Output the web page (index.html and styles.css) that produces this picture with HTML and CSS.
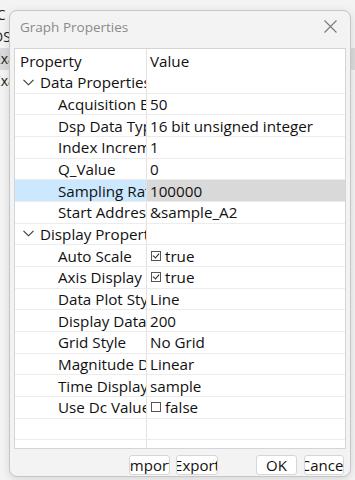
FILE: index.html
```html
<!DOCTYPE html>
<html lang="en">
<head>
  <meta charset="UTF-8" />
  <meta name="viewport" content="width=device-width, initial-scale=1.0"/>
  <title>Graph Properties</title>
  <link rel="stylesheet" href="styles.css">
</head>
<body>

  <div class="desktop">
    <div class="bg-list">
      <div class="bg-item">.C</div>
      <div class="bg-item">DSO</div>
      <div class="bg-item selected">Exa</div>
      <div class="bg-item">Exa</div>
    </div>

    <div class="dialog">
      <div class="titlebar">
        <span class="title">Graph Properties</span>
        <svg class="close" width="13" height="13" viewBox="0 0 13 13">
          <path d="M0.5 0.5 L12.5 12.5 M12.5 0.5 L0.5 12.5" stroke="#7a7a7a" stroke-width="1.1" fill="none"/>
        </svg>
      </div>

      <div class="grid-panel">
        <div class="row head">
          <div class="cell name">Property</div>
          <div class="cell value">Value</div>
        </div>

        <div class="row group">
          <div class="cell name">
            <svg class="chevron" width="11" height="7" viewBox="0 0 11 7"><path d="M0.5 0.8 L5.5 5.8 L10.5 0.8" stroke="#333" stroke-width="1.1" fill="none"/></svg>
            Data Properties
          </div>
          <div class="cell value"></div>
        </div>
        <div class="row"><div class="cell name child">Acquisition Buffer Size</div><div class="cell value">50</div></div>
        <div class="row"><div class="cell name child">Dsp Data Type</div><div class="cell value">16 bit unsigned integer</div></div>
        <div class="row"><div class="cell name child">Index Increment</div><div class="cell value">1</div></div>
        <div class="row"><div class="cell name child">Q_Value</div><div class="cell value">0</div></div>
        <div class="row selected"><div class="cell name child">Sampling Rate</div><div class="cell value">100000</div></div>
        <div class="row"><div class="cell name child">Start Address</div><div class="cell value">&amp;sample_A2</div></div>

        <div class="row group">
          <div class="cell name">
            <svg class="chevron" width="11" height="7" viewBox="0 0 11 7"><path d="M0.5 0.8 L5.5 5.8 L10.5 0.8" stroke="#333" stroke-width="1.1" fill="none"/></svg>
            Display Properties
          </div>
          <div class="cell value"></div>
        </div>
        <div class="row"><div class="cell name child">Auto Scale</div><div class="cell value"><span class="check on"></span>true</div></div>
        <div class="row"><div class="cell name child">Axis Display</div><div class="cell value"><span class="check on"></span>true</div></div>
        <div class="row"><div class="cell name child">Data Plot Style</div><div class="cell value">Line</div></div>
        <div class="row"><div class="cell name child">Display Data Size</div><div class="cell value">200</div></div>
        <div class="row"><div class="cell name child">Grid Style</div><div class="cell value">No Grid</div></div>
        <div class="row"><div class="cell name child">Magnitude Display</div><div class="cell value">Linear</div></div>
        <div class="row"><div class="cell name child">Time Display</div><div class="cell value">sample</div></div>
        <div class="row"><div class="cell name child">Use Dc Value</div><div class="cell value"><span class="check"></span>false</div></div>
        <div class="row"><div class="cell name"></div><div class="cell value"></div></div>
        <div class="row"><div class="cell name"></div><div class="cell value"></div></div>
        <div class="row"><div class="cell name"></div><div class="cell value"></div></div>
      </div>

      <div class="buttons">
        <button class="btn">Import</button>
        <button class="btn wide">Export</button>
        <span class="spacer"></span>
        <button class="btn">OK</button>
        <button class="btn narrow">Cancel</button>
      </div>
    </div>
  </div>

</body>
</html>
```

FILE: styles.css
```css
body {
  margin: 0;
  font-family: "Open Sans", "Noto Sans", sans-serif;
  background: #f0f0f0;
  color: #111;
}
.desktop {
  position: relative;
  width: 355px;
  height: 480px;
  overflow: hidden;
  background: #f3f3f3;
}
.bg-list {
  padding-top: 4px;
  margin-left: -11px;
  font-size: 14px;
}
.bg-item {
  height: 22px;
  line-height: 22px;
  padding-left: 4px;
  color: #222;
}
.bg-item.selected {
  background: #dadada;
}
.dialog {
  position: absolute;
  left: 9px;
  top: 10px;
  width: 340px;
  height: 465px;
  background: #f3f3f3;
  border: 1px solid #c6c6c6;
  border-radius: 8px;
  box-shadow: 0 2px 8px rgba(0,0,0,0.12);
  display: flex;
  flex-direction: column;
  overflow: hidden;
}
.titlebar {
  height: 37px;
  display: flex;
  align-items: center;
  justify-content: space-between;
  padding: 0 13px 0 10px;
}
.title {
  font-size: 13.5px;
  color: #8a8a8a;
  margin-top: -6px;
}
.close {
  margin-top: -6px;
}
.grid-panel {
  margin: 0 4px 0 4px;
  height: 399px;
  background: #fff;
  border: 1px solid #d4d4d4;
  overflow: hidden;
  font-size: 15.2px;
}
.row {
  display: grid;
  grid-template-columns: 132px 1fr;
  height: 21.67px;
  border-bottom: 1px solid #ececec;
  box-sizing: border-box;
}
.row.head {
  height: 23px;
  border-bottom: none;
}
.cell {
  white-space: nowrap;
  overflow: hidden;
  line-height: 20px;
  display: flex;
  align-items: center;
}
.cell.name {
  padding-left: 5px;
  border-right: 1px solid #e2e2e2;
}
.cell.name.child {
  padding-left: 43px;
}
.cell.value {
  padding-left: 3px;
}
.chevron {
  margin: 0 6px 0 3px;
  flex-shrink: 0;
}
.row.selected .cell.name {
  background: #cce8ff;
}
.row.selected .cell.value {
  background: #d9d9d9;
}
.check {
  display: inline-block;
  width: 8px;
  height: 8px;
  border: 1px solid #555;
  margin: 0 4px 0 1px;
  position: relative;
  flex-shrink: 0;
}
.check.on::after {
  content: "";
  position: absolute;
  left: 2px;
  top: 0px;
  width: 3px;
  height: 5px;
  border-right: 1.2px solid #222;
  border-bottom: 1.2px solid #222;
  transform: rotate(40deg);
}
.buttons {
  display: flex;
  gap: 6px;
  padding: 6px 5px 0 119px;
}
.spacer {
  width: 26px;
}
.btn {
  width: 41px;
  height: 20px;
  padding: 0;
  background: #fff;
  border: 1px solid #d6d6d6;
  border-radius: 3px;
  font-family: inherit;
  font-size: 15px;
  color: #111;
  display: flex;
  align-items: center;
  justify-content: center;
  overflow: hidden;
  white-space: nowrap;
}
.btn.wide {
  width: 42px;
}
.btn.narrow {
  width: 40px;
  margin-left: 1px;
}
```
